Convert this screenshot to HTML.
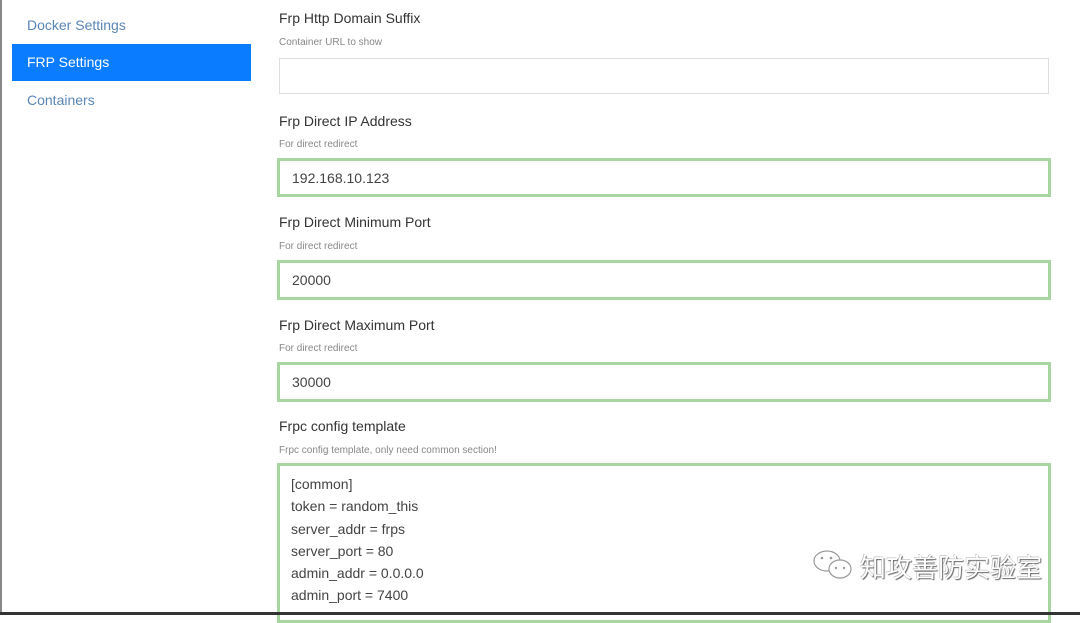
<!DOCTYPE html>
<html><head><meta charset="utf-8"><style>
*{margin:0;padding:0;box-sizing:border-box}
body{width:1080px;height:615px;overflow:hidden;background:#fff;font-family:"Liberation Sans",sans-serif;position:relative}
.lb{position:absolute;left:0;top:0;width:2px;height:615px;background:#888}
.bb{position:absolute;left:0;top:612px;width:1080px;height:3px;background:#333}
.nav{position:absolute;left:12px;width:239px;height:37px;font-size:14px;color:#5a86b5;padding:10px 0 0 15px}
.nav.a{background:#0a7cff;color:#fff}
.l{position:absolute;left:279px;font-size:14px;color:#333}
.h{position:absolute;left:279px;font-size:10px;color:#888}
.in{position:absolute;left:279px;width:770px;height:36px;border:1px solid #ddd}
.g{position:absolute;left:277px;width:774px;border:3px solid #a8d5a0;font-size:14px;color:#444;padding:9px 12px}
.ta{line-height:22.3px;padding:7px 11px}
.wm{position:absolute;top:548px;font-family:"Noto Sans CJK SC",sans-serif;font-size:26px;color:#fff;text-shadow:1px 1px 1px #666,-0.5px -0.5px 0 #aaa}
</style></head><body>
<div class="lb"></div>
<div class="nav" style="top:7px">Docker Settings</div>
<div class="nav a" style="top:44px">FRP Settings</div>
<div class="nav" style="top:82px">Containers</div>

<div class="l" style="top:10px">Frp Http Domain Suffix</div>
<div class="h" style="top:37px">Container URL to show</div>
<div class="in" style="top:58px"></div>

<div class="l" style="top:113px">Frp Direct IP Address</div>
<div class="h" style="top:139px">For direct redirect</div>
<div class="g" style="top:158px;height:39px">192.168.10.123</div>

<div class="l" style="top:214px">Frp Direct Minimum Port</div>
<div class="h" style="top:241px">For direct redirect</div>
<div class="g" style="top:260px;height:40px">20000</div>

<div class="l" style="top:317px">Frp Direct Maximum Port</div>
<div class="h" style="top:343px">For direct redirect</div>
<div class="g" style="top:362px;height:40px">30000</div>

<div class="l" style="top:418px">Frpc config template</div>
<div class="h" style="top:445px">Frpc config template, only need common section!</div>
<div class="g ta" style="top:463px;height:160px">[common]<br>token = random_this<br>server_addr = frps<br>server_port = 80<br>admin_addr = 0.0.0.0<br>admin_port = 7400</div>

<svg style="position:absolute;left:812px;top:548px" width="46" height="36" viewBox="0 0 46 36"><g fill="#fff" stroke="#999" stroke-width="1.2"><ellipse cx="15" cy="13" rx="13" ry="10"/><ellipse cx="28" cy="21" rx="11" ry="9"/></g><g fill="#999"><circle cx="10" cy="10" r="1.3"/><circle cx="19" cy="10" r="1.3"/><circle cx="24" cy="20" r="1.2"/><circle cx="32" cy="20" r="1.2"/></g></svg>
<div class="wm" style="left:860px">知攻善防实验室</div>
<div class="bb"></div>
</body></html>
